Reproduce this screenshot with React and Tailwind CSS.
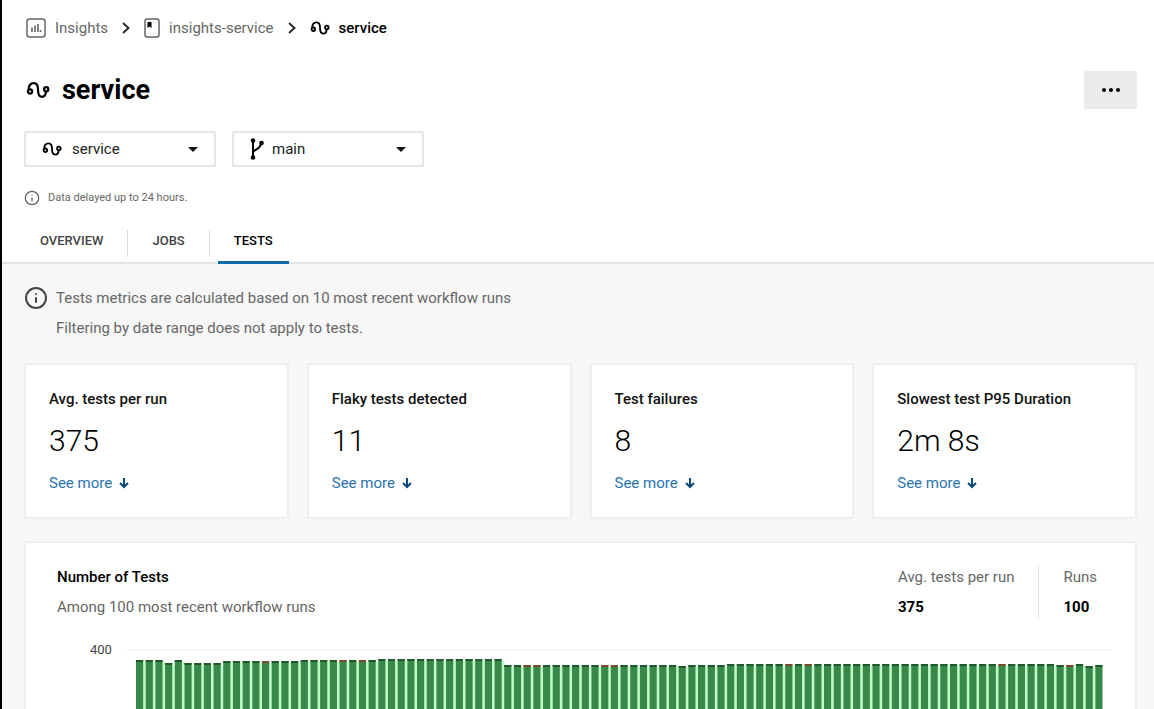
import { useState } from "react";
import { Info } from "lucide-react";

const tabs = ["Overview", "Jobs", "Tests"];

const stats = [
  { label: "Avg. tests per run", value: "375" },
  { label: "Flaky tests detected", value: "11" },
  { label: "Test failures", value: "8" },
  { label: "Slowest test P95 Duration", value: "2m 8s" }
];

// consecutive runs that share a test count
const runGroups = [
  [3, 391],
  [1, 388],
  [1, 391],
  [4, 388],
  [8, 390],
  [8, 391],
  [13, 392],
  [18, 386],
  [1, 385],
  [4, 386],
  [34, 387],
  [2, 386],
  [1, 387],
  [1, 385],
  [1, 386]
];

const runs = runGroups.flatMap(([count, total]) => Array(count).fill(total));
const runsWithFailures = [13, 21, 23, 40, 41, 48, 49, 67, 69, 89, 96];

const WorkflowIcon = ({ className }) => (
  <svg viewBox="0 0 24 18" fill="none" stroke="currentColor" strokeWidth="2.200" className={className} aria-hidden="true">
    <circle cx="4" cy="10.500" r="2.100" />
    <path d="M2.600 9C2.600 5 4.500 2.200 7.800 2.200C11.200 2.200 12 5 12 8.500C12 12.500 12.800 15.800 15.800 15.800C18.600 15.800 19.800 13.500 20 10.600" />
    <circle cx="20.200" cy="8.300" r="2.100" />
  </svg>
);

const BranchIcon = ({ className }) => (
  <svg viewBox="0 0 14 22" fill="none" stroke="currentColor" strokeWidth="2" className={className} aria-hidden="true">
    <circle cx="3" cy="2.500" r="1.300" />
    <circle cx="3" cy="19.500" r="1.300" />
    <circle cx="11.500" cy="5" r="1.300" />
    <path d="M3 4V18M3 14.500C3.500 11.500 9.500 11.500 10.800 6.500" />
  </svg>
);

const InsightsIcon = () => (
  <svg viewBox="0 0 20 20" fill="none" stroke="currentColor" className="h-5 w-5 text-[#666]" aria-hidden="true">
    <rect x="1" y="1" width="18" height="18" rx="2.500" strokeWidth="1.500" />
    <path d="M6 9.500V14M9 7.500V14M12 6V14M14.500 12V14" strokeWidth="1.600" />
  </svg>
);

const ProjectIcon = () => (
  <svg viewBox="0 0 16 20" fill="none" stroke="currentColor" className="h-5 w-4 text-[#666]" aria-hidden="true">
    <rect x="1" y="1" width="14" height="18" rx="2" strokeWidth="1.500" />
    <path d="M3.500 4H7.500V10L5.500 8.500L3.500 10Z" fill="#000" stroke="none" />
  </svg>
);

const Chevron = () => (
  <svg viewBox="0 0 8 12" fill="none" stroke="#222" strokeWidth="1.800" className="h-3 w-2" aria-hidden="true">
    <path d="M1 1L6.500 6L1 11" />
  </svg>
);

const ArrowDown = () => (
  <svg viewBox="0 0 12 12" fill="none" stroke="#0b4a7c" strokeWidth="2" className="h-3 w-3" aria-hidden="true">
    <path d="M6 1V10M2 6L6 10L10 6" />
  </svg>
);

const Picker = ({ label, value, children }) => (
  <label className="flex h-9 w-48 items-center rounded-xs border-2 border-[#e6e6e6] bg-white px-4">
    {children}
    <select
      aria-label={label}
      className="h-8 min-w-0 flex-1 appearance-none bg-transparent text-[15px] leading-8 text-[#222] outline-none"
    >
      <option>{value}</option>
    </select>
    <svg viewBox="0 0 10 5" className="h-[5px] w-[10px]" aria-hidden="true">
      <path d="M0 0H10L5 5Z" fill="#111" />
    </svg>
  </label>
);

const StatCard = ({ label, value }) => (
  <article className="rounded-xs border-2 border-[#eeeeee] bg-white px-[23px] py-6">
    <h2 className="text-[15px] leading-5 font-medium text-[#111]">{label}</h2>
    <p className="mt-3 text-[30px] leading-10 font-light text-black">{value}</p>
    <a href="#number-of-tests" className="mt-3 flex items-center gap-1.5 text-[15px] leading-5 text-[#2a73b0]">
      See more
      <ArrowDown />
    </a>
  </article>
);

const RunsChart = () => (
  <div className="mt-5 flex pr-[22px] pl-16">
    <span className="w-9 text-[13px] leading-4 text-[#444]">400</span>
    <div className="flex-1 pt-2">
      <div className="border-t border-[#f3f3f3] pr-2 pl-2.5">
        <svg viewBox="0 0 1000 390" preserveAspectRatio="none" className="h-[390px] w-full" role="img" aria-label="Tests per run">
          {runs.map((total, i) => (
            <g key={i}>
              {i < runs.length - 1 && (
                <rect x={i * 10 + 7} y={402 - total} width="3" height={total} fill="#bdfcc6" />
              )}
              <rect x={i * 10} y={400 - total} width="7.400" height={total} fill="#388849" />
              <rect
                x={i * 10}
                y={400 - total}
                width="7.400"
                height="2"
                fill={runsWithFailures.includes(i) ? "#7a4a2c" : "#1c5a2a"}
              />
            </g>
          ))}
        </svg>
      </div>
    </div>
  </div>
);

const App = () => {
  const [activeTab, setActiveTab] = useState("Tests");

  return (
    <div className="h-screen overflow-hidden border-l-2 border-black bg-[#f7f7f7] font-[Roboto,sans-serif]">
      <header className="border-b-2 border-[#e3e3e3] bg-white pt-4 pr-[17px] pl-[22px]">
        <nav aria-label="Breadcrumb" className="flex h-6 items-center pl-0.5 text-[15px] text-[#666]">
          <a href="#insights" className="flex items-center gap-[9px]">
            <InsightsIcon />
            Insights
          </a>
          <span className="px-3.5">
            <Chevron />
          </span>
          <a href="#project" className="flex items-center gap-[9px]">
            <ProjectIcon />
            insights-service
          </a>
          <span className="px-3.5">
            <Chevron />
          </span>
          <span className="flex items-center gap-[9px] font-medium text-black">
            <WorkflowIcon className="h-4 w-5" />
            service
          </span>
        </nav>

        <div className="mt-[31px] flex h-[38px] items-center justify-between">
          <h1 className="flex items-center gap-3 pl-0.5 text-[27px] font-bold text-black">
            <WorkflowIcon className="h-[18px] w-6" />
            service
          </h1>
          <button type="button" aria-label="More actions" className="flex h-[38px] w-[53px] items-center justify-center gap-[3px] rounded-xs bg-[#ebebeb]">
            <span className="h-1 w-1 rounded-full bg-black" />
            <span className="h-1 w-1 rounded-full bg-black" />
            <span className="h-1 w-1 rounded-full bg-black" />
          </button>
        </div>

        <div className="mt-[22px] flex gap-4">
          <Picker label="Workflow" value="service">
            <WorkflowIcon className="mr-2.5 h-4 w-5" />
          </Picker>
          <Picker label="Branch" value="main">
            <BranchIcon className="mr-2 h-[22px] w-[14px]" />
          </Picker>
        </div>

        <p className="mt-[19px] flex items-center gap-2 text-[11px] leading-6 text-[#666]">
          <Info size={16} strokeWidth={2} />
          Data delayed up to 24 hours.
        </p>

        <div role="tablist" className="mt-3 -mb-[2px] flex">
          {tabs.map((tab, i) => (
            <div key={tab} className="flex">
              {i > 0 && <span className="mx-2 mt-2 h-[27px] w-px bg-[#ddd]" />}
              <button
                type="button"
                role="tab"
                aria-selected={activeTab === tab}
                onClick={() => setActiveTab(tab)}
                className={`h-[42px] border-b-3 px-4 pb-0.5 text-[13px] font-medium uppercase ${
                  activeTab === tab ? "border-[#0e6cad] text-black" : "border-transparent text-[#444]"
                }`}
              >
                {tab}
              </button>
            </div>
          ))}
        </div>
      </header>

      <main className="pt-[19px] pr-[17px] pl-[22px]">
        <div className="flex gap-2 text-[15px] text-[#666]">
          <Info size={24} strokeWidth={2} className="mt-[3px] text-[#444]" />
          <div className="leading-[30px]">
            <p>Tests metrics are calculated based on 10 most recent workflow runs</p>
            <p>Filtering by date range does not apply to tests.</p>
          </div>
        </div>

        <section className="mt-5 grid grid-cols-4 gap-[18px]">
          {stats.map((stat) => (
            <StatCard key={stat.label} {...stat} />
          ))}
        </section>

        <section id="number-of-tests" className="mt-[22px] rounded-xs border-2 border-[#eeeeee] bg-white pt-[19px]">
          <div className="flex justify-between pr-[38px] pl-[31px] text-[15px] leading-[30px]">
            <div>
              <h2 className="font-medium text-black">Number of Tests</h2>
              <p className="text-[#666]">Among 100 most recent workflow runs</p>
            </div>
            <div className="flex">
              <dl>
                <dt className="text-[#666]">Avg. tests per run</dt>
                <dd className="font-bold text-black">375</dd>
              </dl>
              <span className="mx-6 my-[3px] w-px bg-[#e6e6e6]" />
              <dl>
                <dt className="text-[#666]">Runs</dt>
                <dd className="font-bold text-black">100</dd>
              </dl>
            </div>
          </div>
          <RunsChart />
        </section>
      </main>
    </div>
  );
};

export default App;
